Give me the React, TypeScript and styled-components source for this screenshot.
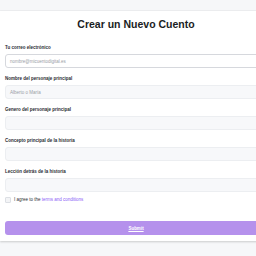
import React from 'react';
import styled, { createGlobalStyle } from 'styled-components';

const GlobalStyle = createGlobalStyle`
  html, body {
    margin: 0;
    padding: 0;
    background: #f6f7f9;
    overflow: hidden;
    font-family: "Liberation Sans", Arial, sans-serif;
  }
`;

const Page = styled.div`
  width: 256px;
  height: 256px;
  padding-top: 11px;
  box-sizing: border-box;
  overflow: hidden;
`;

const Card = styled.div`
  width: 272px;
  box-sizing: border-box;
  background: #ffffff;
  padding: 7px 5px 6px;
  box-shadow: 0 1px 2px rgba(0, 0, 0, 0.18), 0 -1px 0 rgba(0, 0, 0, 0.03);
`;

const Title = styled.h1`
  margin: 0 0 14px;
  font-size: 10.5px;
  line-height: 13px;
  font-weight: 700;
  color: #1a1d23;
  text-align: center;
`;

const Form = styled.form`
  display: flex;
  flex-direction: column;
  gap: 8px;
`;

const Field = styled.div`
  display: flex;
  flex-direction: column;
  gap: 4px;
`;

const Label = styled.label`
  font-size: 4.5px;
  line-height: 5px;
  font-weight: 700;
  color: #2a2d33;
`;

const Input = styled.div<{ $active?: boolean }>`
  height: 14px;
  box-sizing: border-box;
  border-radius: 3px;
  border: 1px solid ${p => (p.$active ? '#d6d8dd' : '#eceef1')};
  background: ${p => (p.$active ? '#ffffff' : '#f7f8fa')};
  padding: 0 4px;
  display: flex;
  align-items: center;
  font-size: 4.5px;
  color: #9a9ea6;
`;

const CheckRow = styled.div`
  display: flex;
  align-items: center;
  gap: 3px;
  margin-top: -3px;
  font-size: 4.5px;
  line-height: 6px;
  color: #2a2d33;
`;

const Box = styled.span`
  width: 4px;
  height: 4px;
  border: 1px solid #dcdfe4;
  border-radius: 1px;
  background: #f3f4f6;
`;

const TermsLink = styled.span`
  color: #8b5cf6;
`;

const Button = styled.div`
  margin-top: 10px;
  height: 14px;
  border-radius: 3px;
  background: #b591ec;
  display: flex;
  align-items: center;
  justify-content: center;
  color: #ffffff;
  font-size: 4.5px;
  font-weight: 700;
  text-decoration: underline;
`;

const fields = [
  { label: 'Tu correo electrónico', placeholder: 'nombre@micuentodigital.es', active: true },
  { label: 'Nombre del personaje principal', placeholder: 'Alberto o María' },
  { label: 'Genero del personaje principal', placeholder: '' },
  { label: 'Concepto principal de la historia', placeholder: '' },
  { label: 'Lección detrás de la historia', placeholder: '' },
];

const App: React.FC = () => {
  return (
    <Page>
      <GlobalStyle />
      <Card>
        <Title>Crear un Nuevo Cuento</Title>
        <Form>
          {fields.map(f => (
            <Field key={f.label}>
              <Label>{f.label}</Label>
              <Input $active={f.active}>{f.placeholder}</Input>
            </Field>
          ))}
          <CheckRow>
            <Box />
            <span>
              I agree to the <TermsLink>terms and conditions</TermsLink>
            </span>
          </CheckRow>
          <Button>Submit</Button>
        </Form>
      </Card>
    </Page>
  );
};

export default App;
